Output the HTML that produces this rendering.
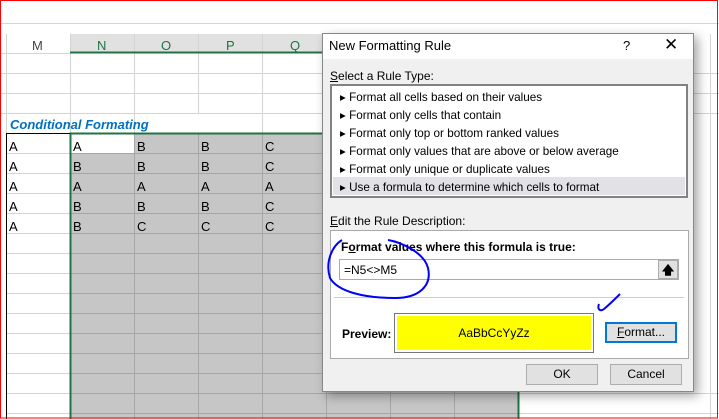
<!DOCTYPE html>
<html><head><style>
*{margin:0;padding:0;box-sizing:border-box}
body{width:719px;height:419px;overflow:hidden;position:relative;background:#fff;font-family:"Liberation Sans",sans-serif;font-size:12px}
.a{position:absolute}
.t{position:absolute;font-size:12px;color:#000}
</style></head><body>
<svg class="a" style="left:0;top:0" width="719" height="419">
<rect x="70" y="34" width="256" height="19" fill="#e1e1e1"/>
<rect x="6" y="34" width="64" height="19" fill="#fff"/>
<line x1="0" y1="23.5" x2="719" y2="23.5" stroke="#d4d4d4"/>
<rect x="70" y="133" width="448" height="286" fill="#c6c6c6"/>
<rect x="70" y="133" width="64" height="20" fill="#fff"/>
<g stroke="#d4d4d4">
<line x1="6.5" y1="34" x2="6.5" y2="419"/>
<line x1="70.5" y1="34" x2="70.5" y2="133"/>
<line x1="134.5" y1="34" x2="134.5" y2="133"/>
<line x1="198.5" y1="34" x2="198.5" y2="113"/>
<line x1="262.5" y1="34" x2="262.5" y2="133"/>
<line x1="710.5" y1="34" x2="710.5" y2="419"/>
<line x1="0" y1="73.5" x2="719" y2="73.5"/>
<line x1="0" y1="93.5" x2="719" y2="93.5"/>
<line x1="0" y1="113.5" x2="719" y2="113.5"/>
</g>
<g stroke="#d4d4d4">
<line x1="6" y1="153.5" x2="70" y2="153.5"/><line x1="6" y1="173.5" x2="70" y2="173.5"/><line x1="6" y1="193.5" x2="70" y2="193.5"/><line x1="6" y1="213.5" x2="70" y2="213.5"/><line x1="6" y1="233.5" x2="70" y2="233.5"/><line x1="6" y1="253.5" x2="70" y2="253.5"/><line x1="6" y1="273.5" x2="70" y2="273.5"/><line x1="6" y1="293.5" x2="70" y2="293.5"/><line x1="6" y1="313.5" x2="70" y2="313.5"/><line x1="6" y1="333.5" x2="70" y2="333.5"/><line x1="6" y1="353.5" x2="70" y2="353.5"/><line x1="6" y1="373.5" x2="70" y2="373.5"/><line x1="6" y1="393.5" x2="70" y2="393.5"/><line x1="6" y1="413.5" x2="70" y2="413.5"/>
<line x1="518" y1="393.5" x2="719" y2="393.5"/><line x1="518" y1="413.5" x2="719" y2="413.5"/>
<line x1="0" y1="53.5" x2="70" y2="53.5"/>
</g>
<g stroke="#a6a6a6">
<line x1="134.5" y1="133" x2="134.5" y2="419"/><line x1="198.5" y1="133" x2="198.5" y2="419"/><line x1="262.5" y1="133" x2="262.5" y2="419"/><line x1="326.5" y1="133" x2="326.5" y2="419"/><line x1="390.5" y1="390" x2="390.5" y2="419"/><line x1="454.5" y1="390" x2="454.5" y2="419"/>
<line x1="70" y1="153.5" x2="518" y2="153.5"/><line x1="70" y1="173.5" x2="518" y2="173.5"/><line x1="70" y1="193.5" x2="518" y2="193.5"/><line x1="70" y1="213.5" x2="518" y2="213.5"/><line x1="70" y1="233.5" x2="518" y2="233.5"/><line x1="70" y1="253.5" x2="518" y2="253.5"/><line x1="70" y1="273.5" x2="518" y2="273.5"/><line x1="70" y1="293.5" x2="518" y2="293.5"/><line x1="70" y1="313.5" x2="518" y2="313.5"/><line x1="70" y1="333.5" x2="518" y2="333.5"/><line x1="70" y1="353.5" x2="518" y2="353.5"/><line x1="70" y1="373.5" x2="518" y2="373.5"/><line x1="70" y1="393.5" x2="518" y2="393.5"/><line x1="70" y1="413.5" x2="518" y2="413.5"/>
</g>
<line x1="70" y1="52.5" x2="330" y2="52.5" stroke="#217346" stroke-width="2"/>
<path d="M70.5 419V133.5H518.5V419" fill="none" stroke="#217346" stroke-width="2"/>
<path d="M6.5 419V133.5H70" fill="none" stroke="#000"/>
<rect x="0.5" y="0.5" width="717" height="417.5" fill="none" stroke="#f00"/>
</svg>
<div class="t" style="left:32px;top:38px;color:#444;font-size:13px">M</div>
<div class="t" style="left:97px;top:38px;color:#217346;font-size:13px">N</div>
<div class="t" style="left:161px;top:38px;color:#217346;font-size:13px">O</div>
<div class="t" style="left:226px;top:38px;color:#217346;font-size:13px">P</div>
<div class="t" style="left:290px;top:38px;color:#217346;font-size:13px">Q</div>
<div class="t" style="left:10px;top:117px;color:#0070c0;font-weight:bold;font-style:italic;font-size:13px">Conditional Formating</div>
<div class="t" style="left:9px;top:137px;line-height:20px;font-size:13px">A<br>A<br>A<br>A<br>A</div>
<div class="t" style="left:73px;top:137px;line-height:20px;font-size:13px">A<br>B<br>A<br>B<br>B</div>
<div class="t" style="left:137px;top:137px;line-height:20px;font-size:13px">B<br>B<br>A<br>B<br>C</div>
<div class="t" style="left:201px;top:137px;line-height:20px;font-size:13px">B<br>B<br>A<br>B<br>C</div>
<div class="t" style="left:265px;top:137px;line-height:20px;font-size:13px">C<br>C<br>A<br>C<br>C</div>
<div class="a" style="left:322px;top:33px;width:372px;height:359px;background:#f0f0f0;border:1px solid #888;box-shadow:4px 4px 10px rgba(0,0,0,.35)">
<div class="a" style="left:0;top:0;width:370px;height:25px;background:#fff"></div>
<div class="t" style="left:6px;top:4px;font-size:13px">New Formatting Rule</div>
<div class="t" style="left:300px;top:4px;font-size:13px">?</div>
<div class="t" style="left:341px;top:1px;font-size:17px">✕</div>
<div class="t" style="left:7px;top:35px"><u>S</u>elect a Rule Type:</div>
<div class="a" style="left:7px;top:50px;width:358px;height:114px;background:#fff;border:2px solid #828282"></div>
<div class="a" style="left:10px;top:143px;width:352px;height:18px;background:#e1e1e6"></div>
<div class="t" style="left:17px;top:55px;line-height:18px;font-size:11.7px">▸ Format all cells based on their values<br>▸ Format only cells that contain<br>▸ Format only top or bottom ranked values<br>▸ Format only values that are above or below average<br>▸ Format only unique or duplicate values<br>▸ Use a formula to determine which cells to format</div>
<div class="t" style="left:7px;top:180px"><u>E</u>dit the Rule Description:</div>
<div class="a" style="left:7px;top:196px;width:359px;height:129px;border:1px solid #aaa;background:#fff"></div>
<div class="t" style="left:18px;top:206px;font-weight:bold">F<u>o</u>rmat values where this formula is true:</div>
<div class="a" style="left:16px;top:225px;width:340px;height:21px;border:1px solid #aaa;background:#fff"></div>
<div class="t" style="left:21px;top:229px">=N5&lt;&gt;M5</div>
<div class="a" style="left:335px;top:226px;width:20px;height:19px;background:#e1e1e1;border:1px solid #adadad;text-align:center;font-size:12px;font-weight:bold">🡅</div>
<div class="a" style="left:11px;top:263px;width:350px;height:1px;background:#ccc"></div>
<div class="t" style="left:19px;top:293px;font-weight:bold">Preview:</div>
<div class="a" style="left:71px;top:279px;width:200px;height:40px;border:1px solid #777;background:#fff"><div style="margin:2px;height:34px;background:#ff0;text-align:center;line-height:34px">AaBbCcYyZz</div></div>
<div class="a" style="left:282px;top:288px;width:72px;height:21px;border:2px solid #0078d7;background:#e1e1e1;text-align:center;line-height:17px"><u>F</u>ormat...</div>
<div class="a" style="left:203px;top:330px;width:72px;height:21px;border:1px solid #adadad;background:#e1e1e1;text-align:center;line-height:19px">OK</div>
<div class="a" style="left:287px;top:330px;width:72px;height:21px;border:1px solid #adadad;background:#e1e1e1;text-align:center;line-height:19px">Cancel</div>
</div>
<svg class="a" style="left:0;top:0" width="719" height="419">
<path d="M342 240C332 246 325 262 330 278C338 292 365 298 395 298C420 298 432 285 428 268C424 252 400 242 388 240" fill="none" stroke="#0000ff" stroke-width="2"/>
<path d="M599 304C597 309 600 312 604 309C610 304 616 298 620 294" fill="none" stroke="#0000ff" stroke-width="2"/>
</svg>
</body></html>
